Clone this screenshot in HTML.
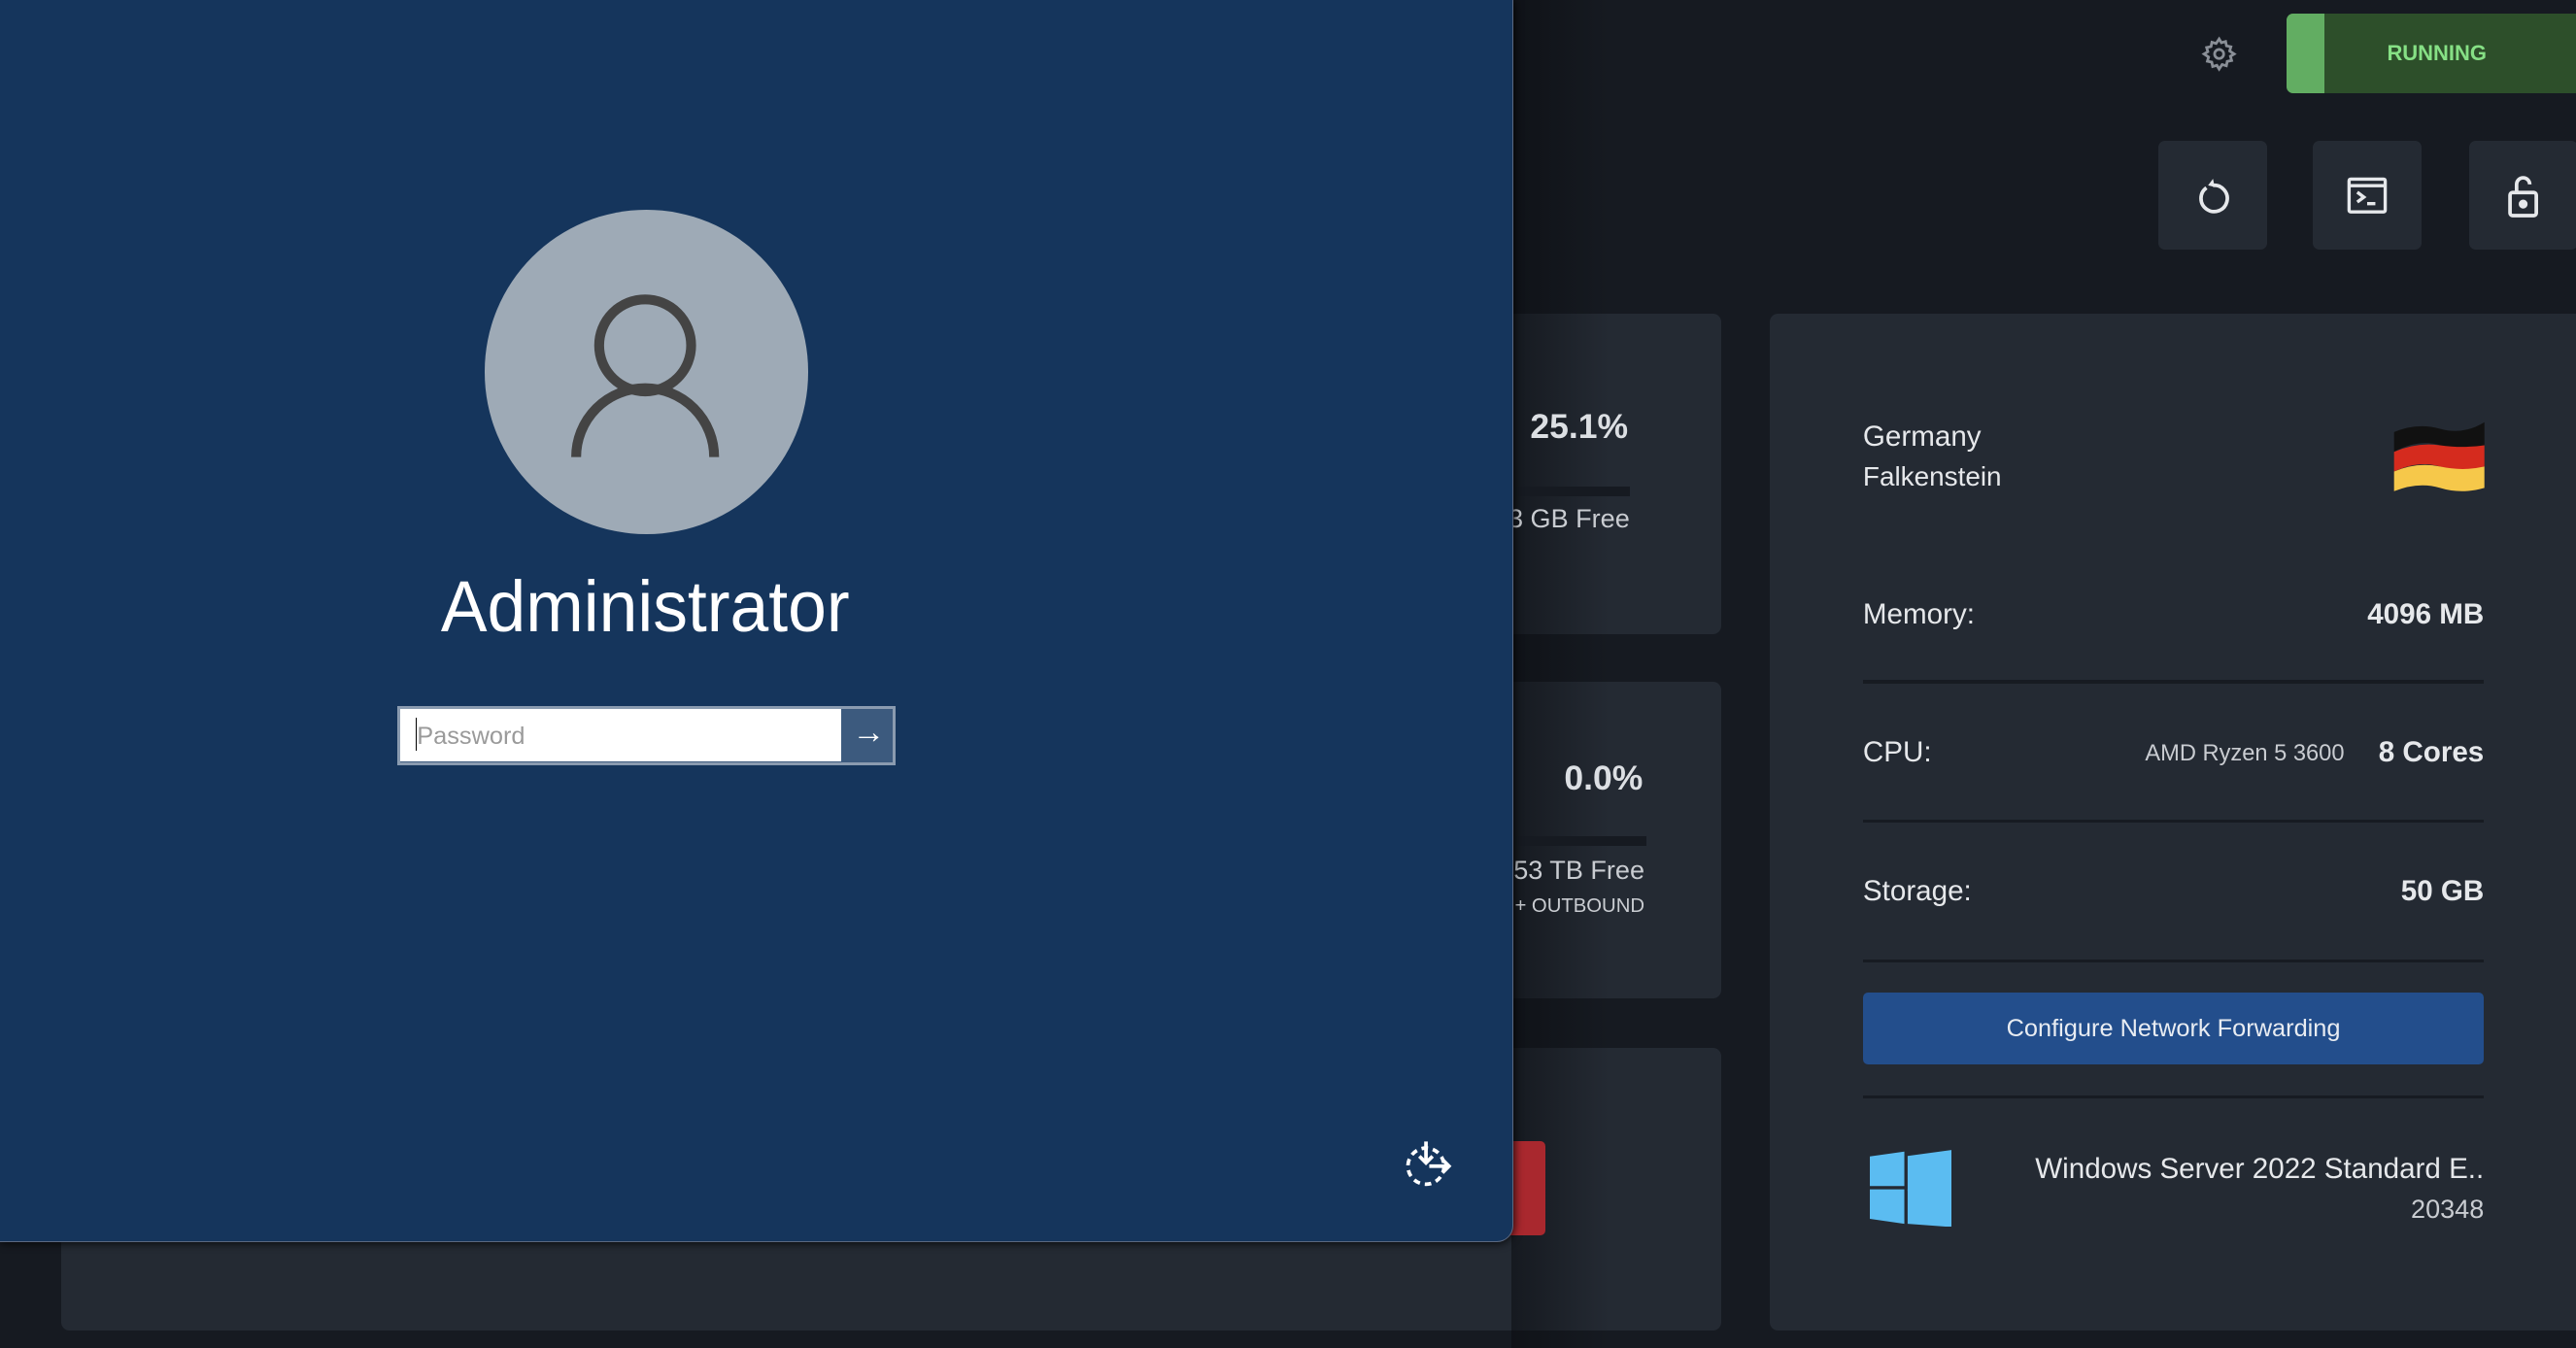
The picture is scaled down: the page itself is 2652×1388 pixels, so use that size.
<!DOCTYPE html>
<html><head><meta charset="utf-8"><style>
*{margin:0;padding:0;box-sizing:border-box}
html,body{width:2652px;height:1388px;overflow:hidden;background:#161a21}
#w{zoom:1.6913;width:1568px;height:821px;position:relative;font-family:"Liberation Sans",sans-serif;color:#e4e6ea;background:#161a21;overflow:hidden}
.a{position:absolute}
.card{position:absolute;background:#242a33;border-radius:5px}
.ib{position:absolute;top:86px;width:66px;height:66px;background:#242a33;border-radius:4px;display:flex;align-items:center;justify-content:center}
.lbl{position:absolute;left:1134px;font-size:17.5px;color:#e6e8eb}
.val{position:absolute;right:56px;font-size:17.5px;font-weight:bold;color:#e6e8eb}
.div{position:absolute;left:1134px;width:378px;height:2px;background:#171b22}
</style></head><body><div id="w">
<div class="card" style="left:37px;top:191px;width:1011px;height:195px"></div>
<div class="card" style="left:37px;top:415px;width:1011px;height:193px"></div>
<div class="card" style="left:37px;top:638px;width:1011px;height:172px"></div>
<div class="card" style="left:1077px;top:191px;width:500px;height:619px"></div>
<div class="a" style="left:920px;top:0;width:60px;height:821px;background:linear-gradient(90deg,rgba(10,12,16,.55),rgba(10,12,16,0))"></div>
<div class="a" style="left:900px;top:695px;width:41px;height:57px;background:#a9282e;border-radius:3px"></div>

<div class="a" style="right:577px;top:248px;font-size:21px;font-weight:bold;color:#dcdfe3">25.1%</div>
<div class="a" style="left:910px;top:296px;width:82px;height:6px;background:#161a21"></div>
<div class="a" style="right:576px;top:307px;font-size:16px;color:#c9ccd1">3 GB Free</div>
<div class="a" style="right:568px;top:462px;font-size:21px;font-weight:bold;color:#dcdfe3">0.0%</div>
<div class="a" style="left:910px;top:509px;width:92px;height:6px;background:#161a21"></div>
<div class="a" style="right:567px;top:521px;font-size:16px;color:#c9ccd1">53 TB Free</div>
<div class="a" style="right:567px;top:545px;font-size:12px;color:#c9ccd1">+ OUTBOUND</div>

<svg class="a" style="left:1340px;top:22px" width="22" height="22" viewBox="0 0 24 24" fill="none" stroke="#8a8f97" stroke-width="1.8"><circle cx="12" cy="12" r="3"/><path d="M12 2l1.5 2.5 2.8-.8.6 2.9 2.9.6-.8 2.8L22 12l-2.5 1.5.8 2.8-2.9.6-.6 2.9-2.8-.8L12 22l-1.5-2.5-2.8.8-.6-2.9-2.9-.6.8-2.8L2 12l2.5-1.5-.8-2.8 2.9-.6.6-2.9 2.8.8z"/></svg>
<div class="a" style="left:1392px;top:8px;width:190px;height:49px;background:#2d4f2a;border-radius:4px;overflow:hidden">
<div class="a" style="left:0;top:0;width:23px;height:49px;background:#62ad62"></div>
<div class="a" style="left:61px;top:17px;font-size:13px;font-weight:bold;color:#86e085">RUNNING</div></div>
<div class="ib" style="left:1314px"><svg width="24" height="26" viewBox="0 0 24 26" fill="none" stroke="#e6e8eb" stroke-width="2.2"><path d="M8 8.5A8 8 0 1 0 12 7"/><path d="M12 3l-3 4 4 1z" fill="#e6e8eb" stroke="none"/></svg></div>
<div class="ib" style="left:1408px"><svg width="26" height="24" viewBox="0 0 26 24" fill="none" stroke="#e6e8eb" stroke-width="2"><rect x="2" y="2" width="22" height="20" rx="1"/><path d="M2 6h22"/><path d="M7 10l4 3-4 3M13 17h5"/></svg></div>
<div class="ib" style="left:1503px"><svg width="22" height="28" viewBox="0 0 22 28" fill="none" stroke="#e6e8eb" stroke-width="2.2"><rect x="3" y="12" width="16" height="14" rx="1.5"/><path d="M7 12V7a4 4 0 0 1 8 0"/><circle cx="11" cy="19" r="1.6" fill="#e6e8eb"/></svg></div>

<div class="lbl" style="top:256px">Germany</div>
<div class="lbl" style="top:281px;font-size:16.5px">Falkenstein</div>
<svg class="a" style="left:1456px;top:253px" width="57" height="48" viewBox="0 0 57 48"><path d="M1 10 Q15 4 29 8 T56 4 V18 Q42 22 29 18 T1 22z" fill="#111"/><path d="M1 22 Q15 16 29 18 T56 18 V31 Q42 35 29 31 T1 34z" fill="#d52b1e"/><path d="M1 34 Q15 28 29 31 T56 31 V44 Q42 48 29 44 T1 46z" fill="#f6c84a"/></svg>
<div class="lbl" style="top:364px">Memory:</div><div class="val" style="top:364px">4096 MB</div>
<div class="div" style="top:414px"></div>
<div class="lbl" style="top:448px">CPU:</div>
<div class="a" style="right:141px;top:451px;font-size:14px;color:#c9ccd1">AMD Ryzen 5 3600</div>
<div class="val" style="top:448px">8 Cores</div>
<div class="div" style="top:499px"></div>
<div class="lbl" style="top:533px">Storage:</div><div class="val" style="top:533px">50 GB</div>
<div class="div" style="top:584px"></div>
<div class="a" style="left:1134px;top:604px;width:378px;height:44px;background:#234e8c;border-radius:3px;font-size:15px;color:#e8ecf2;text-align:center;line-height:44px">Configure Network Forwarding</div>
<div class="div" style="top:667px"></div>
<svg class="a" style="left:1138px;top:700px" width="50" height="47" viewBox="0 0 50 47" fill="#5bbcf1"><path d="M0 4L21 1V22H0z"/><path d="M23 0.7L50 -3V22H23z" transform="translate(0,3)"/><path d="M0 24H21V45L0 42z"/><path d="M23 24H50V47L23 45z"/></svg>
<div class="a" style="right:56px;top:702px;font-size:17.5px;color:#e6e8eb">Windows Server 2022 Standard E..</div>
<div class="a" style="right:56px;top:727px;font-size:16px;color:#c9ccd1">20348</div>

<div class="a" style="left:0;top:0;width:921px;height:756px;background:#15355c;border-radius:0 0 10px 0;border-right:1px solid #5a6880;border-bottom:1px solid #5a6880;box-shadow:0 0 6px #000">
<div class="a" style="left:295px;top:128px;width:197px;height:197px;border-radius:50%;background:#9eaab6"></div>
<svg class="a" style="left:345px;top:170px" width="96" height="110" viewBox="0 0 96 110" fill="none" stroke="#444" stroke-width="6"><circle cx="48" cy="40" r="28"/><path d="M6 108 A42 42 0 0 1 90 108"/></svg>
<div class="a" style="left:193px;top:344px;width:400px;text-align:center;font-size:44px;color:#fff;transform:scaleX(.96)">Administrator</div>
<div class="a" style="left:242px;top:430px;width:303px;height:36px;border:2px solid #8a9bb0;background:#3c5a7e">
<div class="a" style="left:0;top:0;width:268px;height:32px;background:#fff"></div>
<div class="a" style="left:9px;top:5px;width:1px;height:20px;background:#000"></div>
<div class="a" style="left:10px;top:8px;font-size:15px;color:#9a9a9a">Password</div>
<div class="a" style="left:275px;top:3px;font-size:20px;color:#fff">→</div></div>
<svg class="a" style="left:852px;top:693px" width="34" height="32" viewBox="0 0 34 32" fill="none" stroke="#fff" stroke-width="2.2"><circle cx="16" cy="17" r="11" stroke-dasharray="4 3"/><path d="M16 2v13M12 11l4 4 4-4M18 17h12M26 13l4 4-4 4"/></svg>
</div>
</div></body></html>
